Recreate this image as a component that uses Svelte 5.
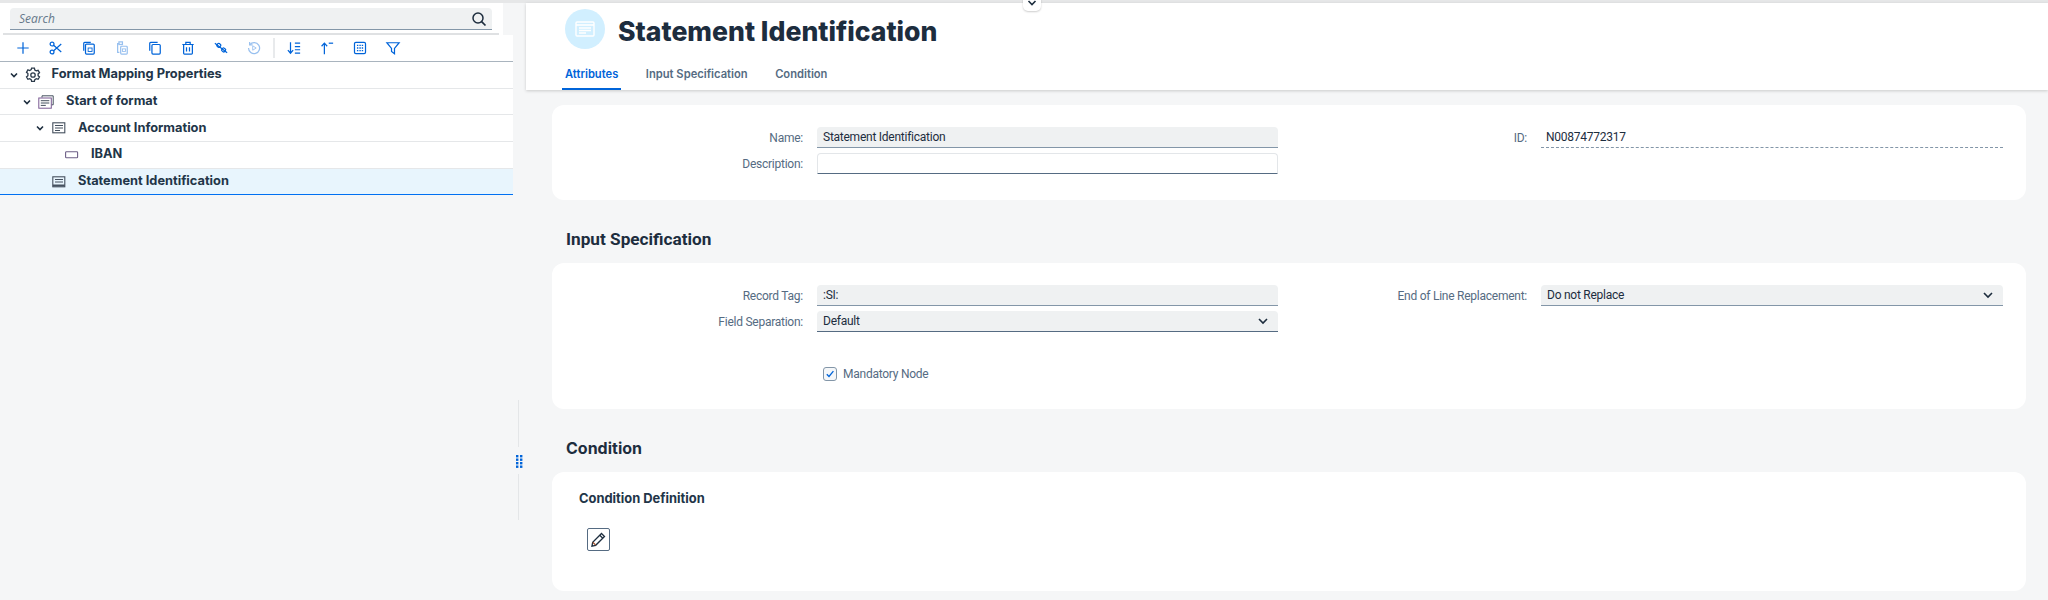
<script>
  const rows = [
    { label: 'Format Mapping Properties', pad: 8.5, gap: 11, icon: 'gear', open: true },
    { label: 'Start of format', pad: 21.5, gap: 12.5, icon: 'stack', open: true },
    { label: 'Account Information', pad: 35, gap: 11, icon: 'rec', open: true },
    { label: 'IBAN', pad: 48, gap: 11, icon: 'field', open: false },
    { label: 'Statement Identification', pad: 35, gap: 11, icon: 'recsel', open: false, selected: true }
  ];
</script>

<div class="page">
  <div class="strip"></div>
  <button class="collapse" aria-label="Collapse">
    <svg width="12" height="12" viewBox="0 0 12 12"><path d="M2.5 3l3.5 3.5L9.5 3" class="chev"/></svg>
  </button>
  <div class="main">
    <aside class="left">
      <div class="top">
        <div class="search">
          <span>Search</span>
          <svg width="16" height="16" viewBox="0 0 16 16"><circle cx="7" cy="7" r="5" fill="none" stroke="#1d2d3e" stroke-width="1.5"/><path d="M10.6 10.6L14.5 14.5" stroke="#1d2d3e" stroke-width="1.7" fill="none"/></svg>
        </div>
        <div class="rule"></div>
        <div class="toolbar">
          <svg class="tool" viewBox="0 0 16 16"><path d="M8 1.5v13M1.5 8h13"/></svg>
          <svg class="tool" viewBox="0 0 16 16"><circle cx="3.5" cy="3.5" r="2.2"/><circle cx="3.5" cy="12.5" r="2.2"/><path d="M5.3 4.8L14 12.5M5.3 11.2L14 3.5"/></svg>
          <svg class="tool" viewBox="0 0 16 16"><path d="M2 11V2.5A1 1 0 0 1 3 1.5h7"/><rect x="4" y="3.5" width="10" height="11.5" rx="1.2"/><rect x="7" y="8" width="4.5" height="4" class="solid"/></svg>
          <svg class="tool off" viewBox="0 0 16 16"><path d="M5 3H3v10h2"/><rect x="4.5" y="1" width="4" height="3"/><rect x="6.5" y="6" width="7.5" height="9" rx="1"/><rect x="8.5" y="9" width="3.5" height="3" class="solid"/></svg>
          <svg class="tool" viewBox="0 0 16 16"><path d="M2 11V2.5A1 1 0 0 1 3 1.5h8"/><rect x="4.5" y="4" width="9.5" height="11" rx="1.2"/></svg>
          <svg class="tool" viewBox="0 0 16 16"><path d="M1.5 4h13M5.5 4V1.5h5V4"/><path d="M3 4v10a1 1 0 0 0 1 1h8a1 1 0 0 0 1-1V4"/><path d="M6.3 7v5M9.7 7v5"/></svg>
          <svg class="tool" viewBox="0 0 16 16"><path d="M1 2.5l14 11"/><rect x="3.5" y="3" width="4" height="4" rx="1.2" transform="rotate(38 5.5 5)"/><rect x="9" y="8.2" width="4" height="4" rx="1.2" transform="rotate(38 11 10.2)"/></svg>
          <svg class="tool off" viewBox="0 0 16 16"><path d="M3.2 4.2A6.3 6.3 0 1 1 1.8 8"/><path d="M3 1v3.4h3.4"/><path d="M6.5 5.5l4 2.5-4 2.5z" class="solid"/></svg>
          <div class="sep"></div>
          <svg class="tool" viewBox="0 0 16 16"><path d="M4 1.5v12M1 10.5l3 3.5 3-3.5"/><path d="M9 2.5h6M9 6.3h6M9 10h6M9 13.8h6"/></svg>
          <svg class="tool" viewBox="0 0 16 16"><path d="M5 15V3M1.8 6L5 2.5 8.2 6"/><path d="M10 2.5h5"/></svg>
          <svg class="tool" viewBox="0 0 16 16"><rect x="1.7" y="1.5" width="12.6" height="13" rx="1.6"/><path d="M4.5 5h1.6M7.3 5h1.6M10 5h1.6M4.5 8h1.6M7.3 8h1.6M10 8h1.6M4.5 11h1.6M7.3 11h1.6M10 11h1.6" stroke-width="1.6"/></svg>
          <svg class="tool" viewBox="0 0 16 16"><path d="M1 2h14L9.7 8.5V14.5L6.3 12V8.5z"/></svg>
        </div>
      </div>
      <div class="tree">
        {#each rows as row}
          <div class="row" class:selected={row.selected} style="padding-left: {row.pad}px">
            <span class="twist">
              {#if row.open}
                <svg width="10" height="10" viewBox="0 0 10 10"><path d="M2 3.5L5 6.5 8 3.5" class="chev"/></svg>
              {/if}
            </span>
            <span class="nodeicon">
              {#if row.icon === 'gear'}
                <svg width="16" height="16" viewBox="0 0 16 16" fill="none" stroke="#2c3b4b" stroke-width="1.3"><path d="M6.6 1.2h2.8l.4 1.8 1.5.9 1.8-.6 1.4 2.4-1.4 1.2v1.8l1.4 1.2-1.4 2.4-1.8-.6-1.5.9-.4 1.8H6.6l-.4-1.8-1.5-.9-1.8.6-1.4-2.4 1.4-1.2V6.5L1.5 5.3 2.9 2.9l1.8.6 1.5-.9z"/><circle cx="8" cy="8" r="2.2"/></svg>
              {:else if row.icon === 'stack'}
                <svg width="16" height="14" viewBox="0 0 16 14" fill="none" stroke="#45505e" stroke-width="1"><path d="M4 2.5V.8h11.2v9H13.5"/><rect x=".8" y="3" width="12.5" height="10.2" stroke="#7a5a93"/><path d="M2.8 5.7h8.5M2.8 8h8.5M2.8 10.4h5"/></svg>
              {:else if row.icon === 'rec'}
                <svg width="14" height="12" viewBox="0 0 14 12" fill="none" stroke="#45505e" stroke-width="1.1"><rect x=".8" y=".8" width="12" height="10"/><path d="M3 3.5h8M3 6h8M3 8.5h5"/></svg>
              {:else if row.icon === 'recsel'}
                <svg width="14" height="12" viewBox="0 0 14 12" fill="none" stroke="#45505e" stroke-width="1.1"><rect x=".8" y=".8" width="12" height="10"/><path d="M3 3.5h8M3 6h8"/><path d="M.8 9.5h12" stroke-width="2"/></svg>
              {:else}
                <svg width="14" height="8" viewBox="0 0 14 8" fill="none" stroke="#6d5f86" stroke-width="1.1"><rect x=".6" y=".8" width="12" height="6" rx=".8"/></svg>
              {/if}
            </span>
            <span class="rowlabel" style="margin-left: {row.gap}px">{row.label}</span>
          </div>
        {/each}
      </div>
    </aside>

    <div class="splitter">
      <div class="bar"></div>
      <svg width="8" height="13" viewBox="0 0 8 13" class="grip"><g fill="#0064d9"><rect x="0" y="0" width="2.4" height="2.4"/><rect x="4" y="0" width="2.4" height="2.4"/><rect x="0" y="3.5" width="2.4" height="2.4"/><rect x="4" y="3.5" width="2.4" height="2.4"/><rect x="0" y="7" width="2.4" height="2.4"/><rect x="4" y="7" width="2.4" height="2.4"/><rect x="0" y="10.5" width="2.4" height="2.4"/><rect x="4" y="10.5" width="2.4" height="2.4"/></g></svg>
      <div class="bar short"></div>
    </div>

    <main class="right">
      <header class="head">
        <div class="titlebar">
          <div class="avatar">
            <svg width="20" height="16" viewBox="0 0 20 16" fill="none" stroke="#fff" stroke-width="1.4"><rect x="1" y="1" width="18" height="14" rx="1"/><path d="M1 4h18" stroke-width="1.6"/><path d="M4 7h12M4 9.5h12M4 12h7"/></svg>
          </div>
          <h1>Statement Identification</h1>
        </div>
        <nav class="tabs">
          <span class="tab active">Attributes</span>
          <span class="tab">Input Specification</span>
          <span class="tab">Condition</span>
        </nav>
      </header>

      <section class="card first">
        <div class="form">
          <label>Name:</label>
          <div class="field ro">Statement Identification</div>
          <label>ID:</label>
          <div class="field id">N00874772317</div>
          <label>Description:</label>
          <div class="field edit"></div>
        </div>
      </section>

      <h2 class="spec">Input Specification</h2>
      <section class="card second">
        <div class="form">
          <label>Record Tag:</label>
          <div class="field ro">:SI:</div>
          <label>End of Line Replacement:</label>
          <div class="field sel"><span>Do not Replace</span><svg width="12" height="12" viewBox="0 0 12 12"><path d="M2 4l4 4 4-4" class="chev"/></svg></div>
          <label>Field Separation:</label>
          <div class="field sel strong"><span>Default</span><svg width="12" height="12" viewBox="0 0 12 12"><path d="M2 4l4 4 4-4" class="chev"/></svg></div>
        </div>
        <div class="check">
          <span class="box"><svg width="10" height="10" viewBox="0 0 10 10"><path d="M1.8 5.2L4 7.5 8.4 2.2" fill="none" stroke="#0064d9" stroke-width="1.3"/></svg></span>
          <span class="checktext">Mandatory Node</span>
        </div>
      </section>

      <h2 class="cond">Condition</h2>
      <section class="card third">
        <h3>Condition Definition</h3>
        <button class="edit-btn" aria-label="Edit">
          <svg width="15" height="15" viewBox="0 0 16 16" fill="none" stroke="#1d2d3e" stroke-width="1.4"><path d="M11.2 1.6l3.2 3.2-9.4 9.4-4 .8.8-4z"/><path d="M9.4 3.4l3.2 3.2" stroke="#1d2d3e"/><path d="M2 11l3 3" stroke="#a0522d"/></svg>
        </button>
      </section>
    </main>
  </div>
</div>

<style>
  :global(body) { margin: 0; background: #f5f6f7; }
  .page { width: 2048px; height: 600px; overflow: hidden; position: relative; background: #f5f6f7; color: #1d2d3e; font-family: Roboto, "Noto Sans", sans-serif; }
  .strip { height: 3px; background: #e6e7e8; }
  .collapse { position: absolute; left: 1023px; top: -3px; width: 18px; height: 14px; padding: 0; border: 0; border-radius: 0 0 5px 5px; background: #fff; box-shadow: 0 1px 2px rgba(0,0,0,.2); display: flex; align-items: center; justify-content: center; }
  .chev { fill: none; stroke: #1d2d3e; stroke-width: 1.6; }
  .main { display: flex; height: 597px; }

  .left { width: 513px; flex: none; }
  .top { width: 503px; background: #fff; padding-top: 5px; }
  .search { margin-left: 10px; width: 482px; height: 22px; box-sizing: border-box; background: #eff1f2; border-bottom: 1px solid #8396a8; border-radius: 4px 4px 0 0; display: flex; align-items: center; justify-content: space-between; padding: 0 5px 0 9px; font-size: 12px; font-style: italic; color: #66788a; font-family: "Open Sans", sans-serif; }
  .rule { margin: 3px 4px 0 3px; height: 2px; background: #dfe1e3; }
  .toolbar { display: flex; align-items: center; gap: 19px; padding-left: 16px; height: 26px; width: 513px; box-sizing: border-box; background: #fff; }
  .tool { width: 14px; height: 14px; flex: none; fill: none; stroke: #0064d9; stroke-width: 1.4; overflow: visible; }
  .tool .solid { stroke-width: 1; }
  .tool.off { opacity: .4; }
  .sep { width: 2px; height: 20px; background: #e8eaec; margin: 0 -7px; }

  .tree { border-top: 1px solid #a9b4be; width: 513px; }
  .row { height: 25.7px; box-sizing: content-box; background: #fff; border-bottom: 1px solid #e5e7e9; display: flex; align-items: center; font: 700 12.8px/15px Inter, "Open Sans", sans-serif; color: #223548; }
  .rowlabel { margin-bottom: 2px; }
  .row.selected { background: #e8f5fd; border-bottom: 1px solid #0070f2; }
  .twist { width: 10px; height: 10px; flex: none; display: flex; }
  .nodeicon { width: 16px; margin-left: 6px; flex: none; display: flex; align-items: center; justify-content: center; }

  .splitter { width: 13px; flex: none; display: flex; flex-direction: column; align-items: flex-start; padding: 397px 0 0 3px; box-sizing: border-box; }
  .bar { width: 1px; height: 47px; margin-left: 2px; background: #e4e6e8; }
  .bar.short { height: 46px; }
  .grip { margin: 8px 0 6px 0; flex: none; }

  .right { flex: 1; min-width: 0; }
  .head { background: #fff; height: 87px; box-sizing: border-box; box-shadow: 0 1px 3px rgba(0,0,0,.18); padding: 6px 0 0 36px; }
  .titlebar { display: flex; align-items: center; gap: 13px; height: 40px; margin-left: 3px; }
  .avatar { width: 40px; height: 40px; border-radius: 50%; background: #d1efff; display: flex; align-items: center; justify-content: center; }
  h1 { margin: 3px 0 0; font: 800 26.6px Inter, "Open Sans", sans-serif; color: #1d2d3e; white-space: nowrap; }
  .tabs { display: flex; gap: 21.5px; margin-top: 14px; }
  .tab { font: 600 11.2px Inter, "Open Sans", sans-serif; color: #556b82; padding: 0 3px; height: 27px; line-height: 23px; box-sizing: border-box; }
  .tab.active { color: #0064d9; border-bottom: 2px solid #0064d9; }

  .card { background: #fff; border-radius: 12px; margin-left: 26px; width: 1474px; box-sizing: border-box; }
  .first { margin-top: 15px; height: 95px; padding-top: 22px; }
  .second { height: 146px; padding-top: 22px; }
  .third { height: 119px; padding: 18px 0 0 27px; }
  .form { display: grid; grid-template-columns: 251px 461px 235px 462px; column-gap: 14px; grid-auto-rows: 21px; row-gap: 5px; align-items: center; }
  label { text-align: right; font-size: 12px; letter-spacing: -.25px; color: #556b82; }
  .field { height: 21px; box-sizing: border-box; font-size: 12px; letter-spacing: -.25px; color: #1d2d3e; padding: 0 6px; display: flex; align-items: center; justify-content: space-between; }
  .ro { background: #eff1f2; border-bottom: 1px solid #8396a8; border-radius: 4px 4px 0 0; }
  .sel { background: #eff1f2; border-bottom: 1px solid #8396a8; border-radius: 4px 4px 0 0; padding-right: 9px; }
  .sel.strong { border-bottom-color: #556b82; }
  .edit { background: #fff; border: 1px solid #e3e6e9; border-bottom: 1px solid #556b82; border-radius: 4px 4px 0 0; }
  .id { border-bottom: 1px dashed #8396a8; border-radius: 0; padding-left: 5px; }

  h2 { margin: 0; font: 700 16px Inter, "Noto Sans", sans-serif; color: #1d2d3e; margin-left: 40px; height: 20px; line-height: 18px; }
  .spec { margin-top: 30px; margin-bottom: 13px; font-family: Roboto, sans-serif; font-weight: 700; font-size: 17.2px; }
  .cond { margin-top: 30px; margin-bottom: 13px; }
  .check { display: flex; align-items: center; margin: 35px 0 0 271px; }
  .box { width: 14px; height: 14px; box-sizing: border-box; border: 1px solid #8396a8; border-radius: 3px; background: #f5f7f9; display: flex; align-items: center; justify-content: center; }
  .checktext { margin-left: 6px; font-size: 12px; letter-spacing: -.25px; color: #556b82; }
  h3 { margin: 0; font: 700 12.9px Inter, sans-serif; line-height: 17px; color: #223548; }
  .edit-btn { margin: 21px 0 0 8px; width: 23px; height: 23px; padding: 0; box-sizing: border-box; background: #fff; border: 1px solid #556b82; border-radius: 2px; display: flex; align-items: center; justify-content: center; }
</style>
